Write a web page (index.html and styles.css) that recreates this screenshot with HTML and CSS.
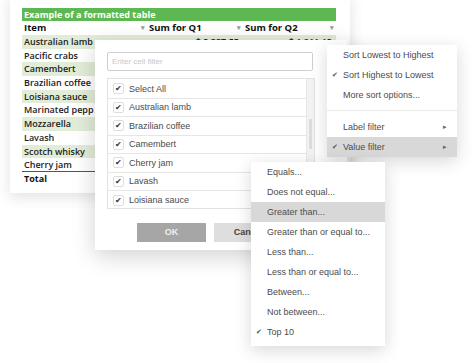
FILE: index.html
```html
<!DOCTYPE html>
<html>
<head>
<meta charset="utf-8">
<link rel="stylesheet" href="styles.css">
</head>
<body>
<div class="stage">
  <div class="card table-card">
    <div class="tbl">
      <div class="title">Example of a formatted table</div>
      <div class="row head">
        <div class="c c1">Item<span class="dd">▾</span></div>
        <div class="c c2">Sum for Q1<span class="dd">▾</span></div>
        <div class="c c3">Sum for Q2<span class="dd">▾</span></div>
      </div>
      <div class="row alt"><div class="c c1">Australian lamb</div><div class="c c2 num">$ 2,337.55</div><div class="c c3 num">$ 1,811.12</div></div>
      <div class="row"><div class="c c1">Pacific crabs</div></div>
      <div class="row alt"><div class="c c1">Camembert</div></div>
      <div class="row"><div class="c c1">Brazilian coffee</div></div>
      <div class="row alt"><div class="c c1">Loisiana sauce</div></div>
      <div class="row"><div class="c c1">Marinated pepp</div></div>
      <div class="row alt"><div class="c c1">Mozzarella</div></div>
      <div class="row"><div class="c c1">Lavash</div></div>
      <div class="row alt"><div class="c c1">Scotch whisky</div></div>
      <div class="row last"><div class="c c1">Cherry jam</div></div>
      <div class="row total"><div class="c c1">Total</div></div>
    </div>
  </div>

  <div class="card dialog">
    <div class="search">Enter cell filter</div>
    <div class="list">
      <div class="items">
        <div class="it"><span class="cb">✔</span>Select All</div>
        <div class="it"><span class="cb">✔</span>Australian lamb</div>
        <div class="it"><span class="cb">✔</span>Brazilian coffee</div>
        <div class="it"><span class="cb">✔</span>Camembert</div>
        <div class="it"><span class="cb">✔</span>Cherry jam</div>
        <div class="it"><span class="cb">✔</span>Lavash</div>
        <div class="it"><span class="cb">✔</span>Loisiana sauce</div>
      </div>
      <div class="scroll"><div class="thumb"></div></div>
    </div>
    <div class="btns">
      <div class="btn ok">OK</div>
      <div class="btn cancel">Cancel</div>
    </div>
  </div>

  <div class="card menu sort">
    <div class="mi"><span class="ck"></span>Sort Lowest to Highest</div>
    <div class="mi"><span class="ck">✔</span>Sort Highest to Lowest</div>
    <div class="mi"><span class="ck"></span>More sort options...</div>
    <div class="sep"></div>
    <div class="mi"><span class="ck"></span>Label filter<span class="arr">▸</span></div>
    <div class="mi hl"><span class="ck">✔</span>Value filter<span class="arr">▸</span></div>
  </div>

  <div class="card menu sub">
    <div class="mi"><span class="ck"></span>Equals...</div>
    <div class="mi"><span class="ck"></span>Does not equal...</div>
    <div class="mi hl"><span class="ck"></span>Greater than...</div>
    <div class="mi"><span class="ck"></span>Greater than or equal to...</div>
    <div class="mi"><span class="ck"></span>Less than...</div>
    <div class="mi"><span class="ck"></span>Less than or equal to...</div>
    <div class="mi"><span class="ck"></span>Between...</div>
    <div class="mi"><span class="ck"></span>Not between...</div>
    <div class="mi"><span class="ck">✔</span>Top 10</div>
  </div>
</div>
</body>
</html>
```

FILE: styles.css
```css
* { box-sizing: border-box; }
html, body { margin: 0; padding: 0; background: #fff; }
body { width: 474px; height: 363px; overflow: hidden; font-family: "Liberation Sans", Arial, sans-serif; }
.stage { position: relative; width: 474px; height: 363px; }

.card { position: absolute; background: #fff; }

.table-card {
  left: 10px; top: -6px; width: 340px; height: 199px;
  box-shadow: 0 4px 14px rgba(0,0,0,0.12);
  padding: 14px 0 0 12px;
}
.tbl { width: 314px; font-family: "Open Sans", sans-serif; font-weight: 600; font-size: 9px; color: #222; }
.title { background: #5db853; color: #fff; height: 13px; line-height: 13px; padding-left: 2px; font-weight: 700; }
.row { display: flex; height: 13.7px; line-height: 13.7px; }
.row.head { font-weight: 700; color: #111; height: 14px; line-height: 14px; font-size: 9.5px; }
.row.alt { background: #e2edd8; }
.row.last { border-bottom: 1px solid #555; }
.row.total { font-weight: 700; color: #111; }
.c { position: relative; padding-left: 2px; white-space: nowrap; overflow: hidden; }
.c1 { width: 125px; }
.c2 { width: 96px; }
.c3 { width: 93px; }
.dd { position: absolute; right: 2px; top: 0; color: #999; font-size: 7px; }
.num { text-align: right; padding-right: 4px; }

.dialog {
  left: 95px; top: 40px; width: 252px; height: 210px;
  box-shadow: 0 6px 22px rgba(0,0,0,0.18);
  padding: 12px 0 0 12px;
  display: flex; flex-direction: column;
}
.search {
  width: 206px; height: 19px; border: 1px solid #cfcfcf; border-radius: 2px;
  font-size: 8px; color: #c8c8c8; line-height: 17px; padding-left: 4px;
}
.list {
  margin-top: 7px; width: 208px; height: 131px; border: 1px solid #e2e2e2;
  display: flex;
}
.items { flex: 1; padding-top: 1px; }
.it {
  height: 18.5px; border-bottom: 1px solid #e6e6e6; display: flex; align-items: center;
  font-size: 9px; color: #4a4a4a; padding-left: 5px;
}
.it:last-child { border-bottom: none; }
.cb {
  width: 11px; height: 11px; border: 1px solid #ddd; border-radius: 2px; margin-right: 5px;
  font-size: 8px; line-height: 10px; text-align: center; color: #333;
}
.scroll { width: 8px; background: #f2f2f2; border-left: 1px solid #e6e6e6; padding-top: 40px; }
.thumb { width: 3px; height: 30px; margin-left: 2px; background: #dcdcdc; }
.btns { display: flex; gap: 8px; margin-top: 14px; margin-left: 30px; }
.btn { width: 69px; height: 19px; line-height: 19px; text-align: center; font-size: 9px; font-weight: 700; }
.ok { background: #a6a6a6; color: #eee; }
.cancel { background: #dedede; color: #444; }

.menu {
  box-shadow: 0 4px 16px rgba(0,0,0,0.16);
  font-size: 9px; color: #4c4c4c;
}
.mi { position: relative; display: flex; align-items: center; height: 20px; padding-left: 5px; white-space: nowrap; }
.ck { width: 11px; font-size: 7px; color: #555; }
.mi.hl { background: #d8d8d8; }
.arr { position: absolute; right: 10px; font-size: 7px; color: #666; }
.sep { height: 1px; background: #eaeaea; margin: 5px 0 6px 0; }

.sort { left: 327px; top: 45px; width: 130px; padding-top: 0; }
.sub { left: 251px; top: 162px; width: 134px; height: 184px; padding-top: 0; }
.sub .mi { height: 20px; padding-left: 5px; }
.sub .ck { width: 11px; }
```
